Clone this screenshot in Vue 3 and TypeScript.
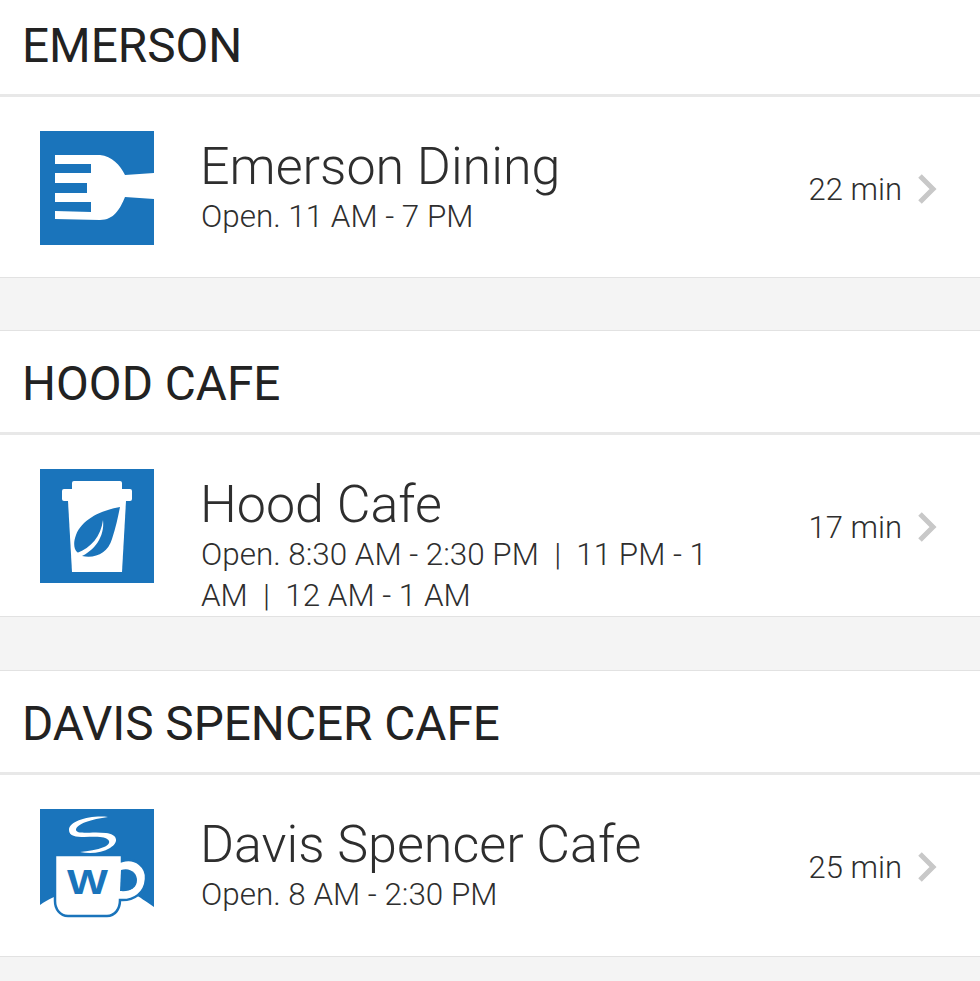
<template>
  <div class="page">
    <section v-for="place in places" :key="place.heading" class="section">
      <h2 class="heading">{{ place.heading }}</h2>
      <div class="row">
        <svg class="logo" viewBox="0 0 114 114">
          <template v-if="place.icon === 'fork'">
            <rect width="114" height="114" fill="#1a74bb" />
            <path
              fill="#fff"
              d="M15 24H60C72 25 80 34 85 44L114 42V68L85 66C80 78 74 89 60 89L15 88V80L51 81V71H15V62H47V52H15V42H51V33H15Z"
            />
          </template>
          <template v-else-if="place.icon === 'cup'">
            <rect width="114" height="114" fill="#1a74bb" />
            <path fill="#fff" d="M34 12H80Q82 12 82 14V20H32V14Q32 12 34 12Z" />
            <rect x="22" y="20" width="70" height="12" rx="2" fill="#fff" />
            <path fill="#fff" d="M28 32H86L82 103H32Z" />
            <path
              fill="#1a74bb"
              d="M80 38C62 41 42 50 36 66C33 74 34 80 37 83L42 87C55 90 68 84 72 70C76 58 78 48 80 38Z"
            />
            <path fill="#fff" d="M63 51C61 67 51 79 37 84L40 88C54 82 65 68 63 51Z" />
          </template>
          <template v-else>
            <path fill="#1a74bb" d="M0 0H114V98C105 92 100 88 94 85L14 88C9 90 4 93 0 96Z" />
            <path
              fill="#fff"
              d="M68 8C50 6 29 12 29 21C29 31 48 27 60 28C71 29 72 35 64 38C57 41 48 42 40 43C50 45 62 44 70 39C80 33 77 25 66 24C52 22 37 26 36 21C36 15 52 10 68 8Z"
            />
            <path
              fill="#fff"
              stroke="#1a74bb"
              stroke-width="2.5"
              d="M15 46H82V52C96 48 107 58 106 70C105 84 94 92 80 91C80 100 75 107 67 107H28C20 107 15 100 15 92Z"
            />
            <path fill="#1a74bb" d="M81 61C90 58 97 64 97 71C97 79 90 83 80 82Z" />
            <text
              x="27"
              y="85"
              class="logo-letter"
              textLength="41"
              lengthAdjust="spacingAndGlyphs"
            >W</text>
          </template>
        </svg>
        <div class="info">
          <div class="name">{{ place.name }}</div>
          <div class="hours">{{ place.hours }}</div>
        </div>
        <div class="wait">
          <span>{{ place.wait }}</span>
          <svg class="chevron" viewBox="0 0 20 32">
            <path d="M3 3L16 16L3 29" />
          </svg>
        </div>
      </div>
    </section>
  </div>
</template>

<script setup lang="ts">
// One block per dining location
interface Place {
  heading: string;
  name: string;
  hours: string;
  wait: string;
  icon: "fork" | "cup" | "mug";
}

const places: Place[] = [
  {
    heading: "EMERSON",
    name: "Emerson Dining",
    hours: "Open. 11 AM - 7 PM",
    wait: "22 min",
    icon: "fork",
  },
  {
    heading: "HOOD CAFE",
    name: "Hood Cafe",
    hours: "Open. 8:30 AM - 2:30 PM  |  11 PM - 1 AM  |  12 AM - 1 AM",
    wait: "17 min",
    icon: "cup",
  },
  {
    heading: "DAVIS SPENCER CAFE",
    name: "Davis Spencer Cafe",
    hours: "Open. 8 AM - 2:30 PM",
    wait: "25 min",
    icon: "mug",
  },
];
</script>

<style>
html,
body {
  margin: 0;
  background: #f4f4f4;
}
</style>

<style scoped>
.page {
  height: 981px;
  overflow: hidden;
  background: #f4f4f4;
  font-family: Roboto, "Liberation Sans", sans-serif;
  color: #2e2e2e;
}
.section {
  margin-bottom: 52px;
  background: #fff;
  border-top: 1px solid #e2e2e2;
  border-bottom: 1px solid #e2e2e2;
}
.section:first-child {
  margin-top: -8px;
}
.section:first-child .row {
  height: 180px;
}
.section + .section + .section {
  margin-top: 53px;
}
.heading {
  margin: 0;
  height: 104px;
  box-sizing: border-box;
  padding-left: 22px;
  border-bottom: 3px solid #e8e8e8;
  font-size: 47.7px;
  font-weight: 400;
  line-height: 106px;
  color: #222;
}
.row {
  display: flex;
  height: 181px;
  overflow: hidden;
  padding-left: 40px;
  padding-right: 43px;
}
.logo {
  flex: none;
  width: 114px;
  height: 114px;
  margin-top: 34px;
}
.logo-letter {
  font-family: "Liberation Sans", sans-serif;
  font-weight: 700;
  font-size: 35px;
  fill: #1a74bb;
}
.info {
  flex: 1;
  padding-left: 46px;
  padding-right: 60px;
  padding-top: 40px;
  min-width: 0;
}
.name {
  font-size: 52px;
  font-weight: 300;
  line-height: 59px;
}
.hours {
  padding-left: 1px;
  font-size: 31.4px;
  font-weight: 300;
  line-height: 41px;
  white-space: pre-wrap;
}
.wait {
  flex: none;
  display: flex;
  align-items: center;
  gap: 15px;
  font-size: 31px;
  font-weight: 300;
  height: 184px;
}
.chevron {
  width: 20px;
  height: 32px;
  fill: none;
  stroke: #c8c8c8;
  stroke-width: 5;
}
</style>
